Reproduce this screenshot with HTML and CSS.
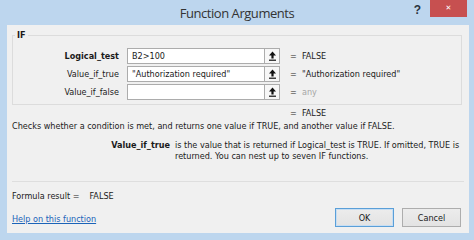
FILE: index.html
```html
<!DOCTYPE html>
<html>
<head>
<meta charset="utf-8">
<link rel="stylesheet" href="styles.css">
</head>
<body>
<div class="window">
  <div class="titlebar">
    <div></div>
    <div class="title">Function Arguments</div>
    <div class="controls">
      <span class="help">?</span>
      <span class="close">&#x2715;</span>
    </div>
  </div>
  <div class="client">
    <fieldset class="group">
      <legend>IF</legend>
      <div class="args">
        <div class="lbl bold">Logical_test</div>
        <div class="inp">B2&gt;100</div>
        <div class="pick"><svg width="9" height="10" viewBox="0 0 9 10"><path d="M4.5 0.5 L8 4.5 H5.6 V7.5 H3.4 V4.5 H1 Z" fill="#111"/><rect x="1" y="8.6" width="7" height="1.2" fill="#111"/></svg></div>
        <div class="eq">=</div>
        <div class="val">FALSE</div>

        <div class="lbl">Value_if_true</div>
        <div class="inp">"Authorization required"</div>
        <div class="pick"><svg width="9" height="10" viewBox="0 0 9 10"><path d="M4.5 0.5 L8 4.5 H5.6 V7.5 H3.4 V4.5 H1 Z" fill="#111"/><rect x="1" y="8.6" width="7" height="1.2" fill="#111"/></svg></div>
        <div class="eq">=</div>
        <div class="val">"Authorization required"</div>

        <div class="lbl">Value_if_false</div>
        <div class="inp"></div>
        <div class="pick"><svg width="9" height="10" viewBox="0 0 9 10"><path d="M4.5 0.5 L8 4.5 H5.6 V7.5 H3.4 V4.5 H1 Z" fill="#111"/><rect x="1" y="8.6" width="7" height="1.2" fill="#111"/></svg></div>
        <div class="eq">=</div>
        <div class="val muted">any</div>
      </div>
    </fieldset>
    <div class="total"><span class="eq">=</span><span>FALSE</span></div>
    <div class="desc">Checks whether a condition is met, and returns one value if TRUE, and another value if FALSE.</div>
    <div class="argdesc">
      <div class="argname">Value_if_true</div>
      <div class="argtext">is the value that is returned if Logical_test is TRUE. If omitted, TRUE is<br>returned. You can nest up to seven IF functions.</div>
    </div>
    <div class="sep"></div>
    <div class="result">Formula result =<span class="resval">FALSE</span></div>
    <div class="footer">
      <a class="link" href="#">Help on this function</a>
      <div class="buttons">
        <button class="btn default">OK</button>
        <button class="btn">Cancel</button>
      </div>
    </div>
  </div>
</div>
</body>
</html>
```
FILE: styles.css
```css
html, body {
  margin: 0;
  padding: 0;
}
body {
  width: 474px;
  height: 240px;
  overflow: hidden;
  font-family: "DejaVu Sans Condensed", "DejaVu Sans", sans-serif;
  font-size: 9px;
  color: #1a1a1a;
}
.window {
  width: 474px;
  height: 240px;
  background: #bdd6ee;
  display: flex;
  flex-direction: column;
}
.titlebar {
  height: 25px;
  display: grid;
  grid-template-columns: 1fr auto 1fr;
  align-items: start;
}
.title {
  font-family: "Open Sans", sans-serif;
  font-size: 13px;
  letter-spacing: -0.45px;
  color: #333;
  line-height: 25px;
  padding-top: 1px;
}
.controls {
  display: flex;
  justify-content: flex-end;
  align-items: flex-start;
}
.help {
  font-family: "Liberation Sans", sans-serif;
  font-weight: bold;
  font-size: 12px;
  color: #2a3340;
  line-height: 20px;
  margin-right: 9px;
}
.close {
  width: 37px;
  height: 17px;
  margin-right: 7px;
  background: #c75050;
  color: #fff;
  font-family: "DejaVu Sans", sans-serif;
  font-weight: bold;
  font-size: 7px;
  line-height: 17px;
  text-align: center;
}
.client {
  margin: 0 5px 0 7px;
  height: 208px;
  background: #f0f0f0;
  display: flex;
  flex-direction: column;
}
.group {
  margin: 5px 7px 0 5px;
  padding: 8px 0 4px 0;
  border: 1px solid #dcdcdc;
  min-inline-size: 0;
}
.group legend {
  padding: 0 2px;
  margin-left: 2px;
  line-height: 10px;
  height: 10px;
  font-weight: bold;
}
.args {
  display: grid;
  grid-template-columns: 114px 137px 16px 22px 1fr;
  grid-auto-rows: 16px;
  row-gap: 2px;
  align-items: center;
}
.lbl {
  text-align: right;
  padding-right: 8px;
}
.bold {
  font-weight: bold;
}
.inp {
  height: 16px;
  box-sizing: border-box;
  border: 1px solid #acacac;
  border-right: none;
  background: #fff;
  line-height: 14px;
  padding-left: 4px;
  white-space: nowrap;
  overflow: hidden;
}
.pick {
  height: 16px;
  box-sizing: border-box;
  border: 1px solid #acacac;
  background: #f7f7f7;
  display: flex;
  align-items: center;
  justify-content: center;
}
.eq {
  padding-left: 10px;
  width: 12px;
  box-sizing: content-box;
}
.args .eq {
  width: auto;
}
.val {
  white-space: nowrap;
}
.muted {
  color: #a6a6a6;
}
.total {
  margin-top: 2px;
  line-height: 12px;
  padding-left: 273px;
  display: flex;
}
.desc {
  margin-top: 1px;
  line-height: 12px;
  padding-left: 5px;
  white-space: nowrap;
}
.argdesc {
  margin-top: 8px;
  display: grid;
  grid-template-columns: 163px 1fr;
  column-gap: 5px;
  line-height: 11px;
}
.argname {
  text-align: right;
  font-weight: bold;
}
.argtext {
  white-space: nowrap;
}
.sep {
  margin: 19px 5px 0 5px;
  height: 1px;
  background: #dedede;
}
.result {
  margin-top: 8px;
  line-height: 12px;
  padding-left: 5px;
}
.resval {
  margin-left: 10px;
}
.footer {
  margin-top: 6px;
  display: flex;
  justify-content: space-between;
  align-items: center;
  padding-left: 5px;
  padding-right: 8px;
}
.link {
  color: #1b63b8;
  text-decoration: underline;
  padding-top: 3px;
}
.buttons {
  display: flex;
  gap: 8px;
}
.btn {
  width: 59px;
  height: 19px;
  box-sizing: border-box;
  margin: 0;
  padding: 0;
  font-family: "DejaVu Sans Condensed", "DejaVu Sans", sans-serif;
  font-size: 9px;
  color: #1a1a1a;
  background: linear-gradient(#ececec, #e3e3e3);
  border: 1px solid #adadad;
  border-radius: 0;
}
.btn.default {
  border-color: #5a9fd8;
  box-shadow: inset 0 0 0 1px #c7def3;
}
```
